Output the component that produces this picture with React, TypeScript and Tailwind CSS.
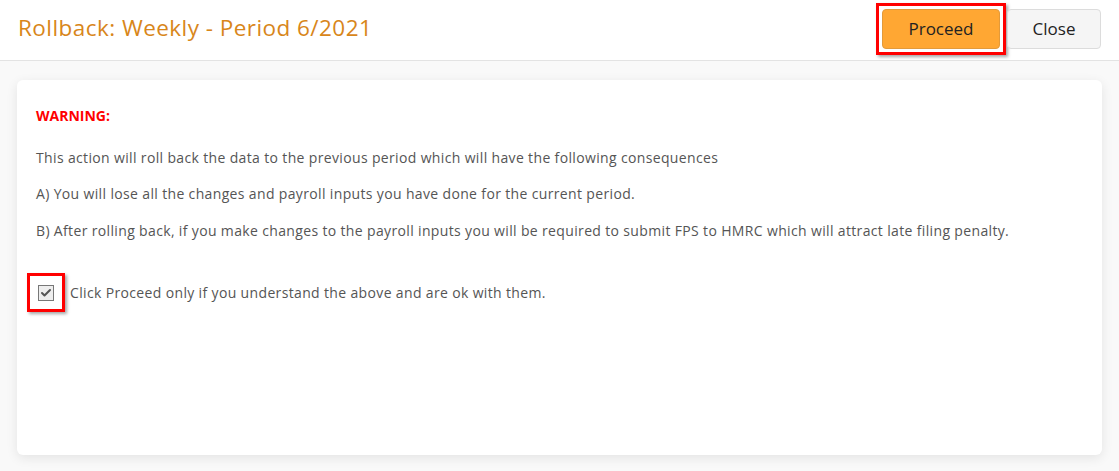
import { Check } from "lucide-react";

const App = () => {
  return (
    <div
      className="w-[1119px] h-[471px] bg-[#f9f9f9] overflow-hidden"
      style={{ fontFamily: "'Open Sans', 'Noto Sans', sans-serif" }}
    >
      <header className="h-[61px] bg-white border-b border-[#e3e3e3] flex items-center justify-between pl-[18px] pr-[18px]">
        <h1 className="text-[22.5px] text-[#d8861a] tracking-[0.45px] mt-[-4px]">
          Rollback: Weekly - Period 6/2021
        </h1>
        <div className="flex items-center gap-[1px] mt-[-3px]">
          <div className="border-[3px] border-[#ff0000] p-[3px] shadow-[2px_2px_3px_rgba(0,0,0,0.35)]">
            <button className="w-[118px] h-[40px] rounded-[4px] bg-[#ffa733] border border-[#e39a3a] text-[17px] text-[#222]">
              Proceed
            </button>
          </div>
          <button className="w-[94px] h-[40px] rounded-[4px] bg-[#f5f5f5] border border-[#dcdcdc] text-[17px] text-[#222]">
            Close
          </button>
        </div>
      </header>

      <main className="px-[17px] pt-[19px]">
        <div className="h-[375px] bg-white rounded-[6px] shadow-[0_3px_12px_rgba(0,0,0,0.09)] pl-[19px] pr-[19px] pt-[26px] text-[14px] tracking-[0.35px] text-[#555]">
          <p className="font-bold text-[#ff0000] leading-[20px] tracking-[0px]">WARNING:</p>
          <p className="mt-[22px] leading-[20px]">
            This action will roll back the data to the previous period which will have the following consequences
          </p>
          <p className="mt-[16px] leading-[20px]">
            A) You will lose all the changes and payroll inputs you have done for the current period.
          </p>
          <p className="mt-[17px] leading-[20px]">
            B) After rolling back, if you make changes to the payroll inputs you will be required to submit FPS to HMRC which will attract late filing penalty.
          </p>
          <div className="mt-[32px] ml-[-9px] flex items-center gap-[5px]">
            <div className="w-[38px] h-[39px] border-[3px] border-[#ff0000] flex items-center justify-center shadow-[2px_2px_3px_rgba(0,0,0,0.35)]">
              <div className="w-[16px] h-[16px] border border-[#777] bg-[#eeeeee] flex items-center justify-center">
                <Check className="w-[12px] h-[12px] text-[#555]" strokeWidth={4} />
              </div>
            </div>
            <span className="leading-[20px]">Click Proceed only if you understand the above and are ok with them.</span>
          </div>
        </div>
      </main>
    </div>
  );
};

export default App;
